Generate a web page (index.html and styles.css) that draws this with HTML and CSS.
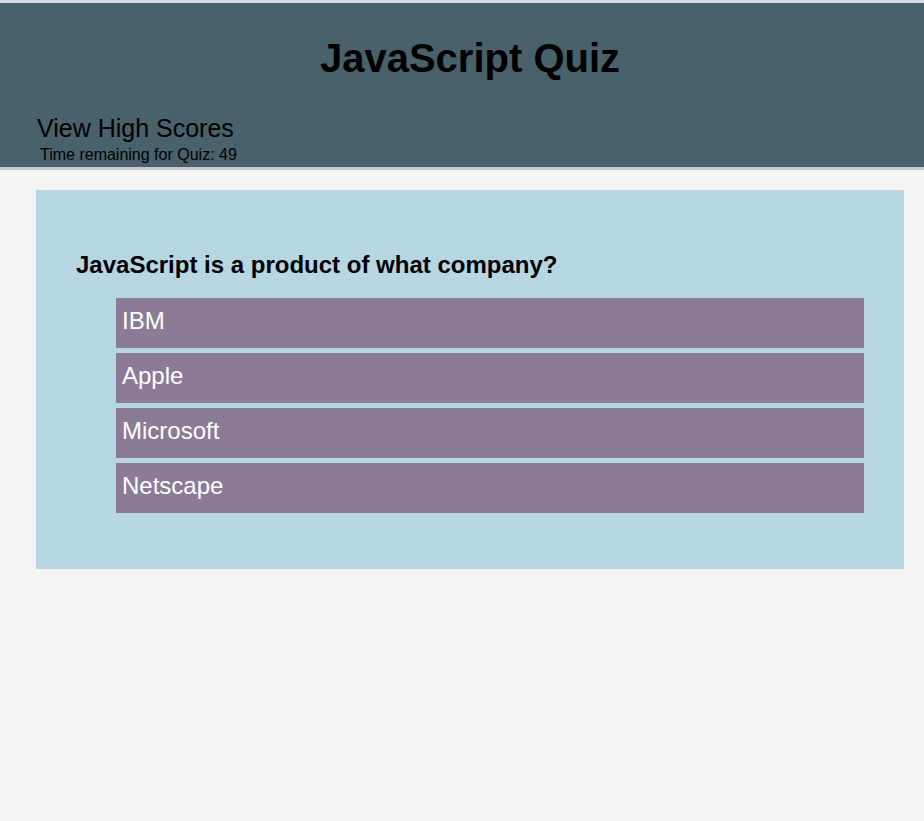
FILE: index.html
```html
<!DOCTYPE html>
<html lang="en">

<head>
  <meta charset="UTF-8">
  <meta name="viewport" content="width=device-width, initial-scale=1.0">
  <title>JavaScript Quiz</title>
  <link rel="stylesheet" href="styles.css">
</head>

<body>
  <header class="header">
    <h1 class="title">JavaScript Quiz</h1>
    <a class="high-scores" href="#">View High Scores</a>
    <div class="timer">Time remaining for Quiz: <span class="seconds">49</span></div>
  </header>
  <main class="main">
    <section class="card">
      <h2 class="question">JavaScript is a product of what company?</h2>
      <div class="answers">
        <button class="answer">IBM</button>
        <button class="answer">Apple</button>
        <button class="answer">Microsoft</button>
        <button class="answer">Netscape</button>
      </div>
    </section>
  </main>
</body>

</html>
```

FILE: styles.css
```css
html,
body {
  margin: 0;
  padding: 0;
}

body {
  background: #f4f4f4;
  font-family: "Liberation Sans", Arial, sans-serif;
  border-top: 3px solid #d9dde2;
  min-height: 818px;
}

.header {
  background: #48616a;
  border-bottom: 3px solid #cacaca;
  padding: 0 37px;
  box-sizing: border-box;
  height: 167px;
}

.title {
  margin: 0;
  padding: 32px 0 0 16px;
  text-align: center;
  font-size: 40px;
  line-height: 46px;
  color: #000;
}

.high-scores {
  display: block;
  margin-top: 33px;
  font-size: 25px;
  line-height: 28px;
  color: #000;
  text-decoration: none;
}

.timer {
  margin: 4px 0 0 3px;
  font-size: 16px;
  line-height: 18px;
  color: #000;
}

.main {
  padding: 20px 20px 0 36px;
}

.card {
  background: #b6d6e1;
  padding: 61px 40px 56px 40px;
}

.question {
  margin: 0 0 20px;
  font-size: 24px;
  line-height: 27px;
  color: #000;
}

.answers {
  display: flex;
  flex-direction: column;
  gap: 5px;
  margin-left: 40px;
}

.answer {
  display: block;
  width: 100%;
  height: 50px;
  padding: 0 6px 4px;
  border: none;
  background: #8b7b97;
  color: #fff;
  font-family: "Liberation Sans", Arial, sans-serif;
  font-size: 24px;
  text-align: left;
  cursor: pointer;
}
```
